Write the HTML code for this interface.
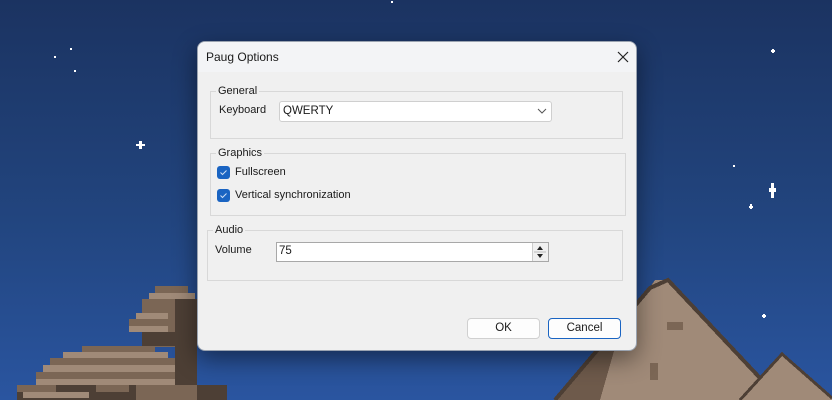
<!DOCTYPE html>
<html><head><style>
*{margin:0;padding:0;box-sizing:border-box}
body{width:832px;height:400px;overflow:hidden;position:relative;font-family:"Liberation Sans",Arial,sans-serif;font-size:11px;color:#1a1a1a;background:linear-gradient(#1b3361,#22457f 55%,#2a55a0)}
.abs{position:absolute}
#dlg{left:197px;top:41px;width:440px;height:310px;background:#f0f0f0;border:1px solid #9aa3b0;border-radius:8px;box-shadow:0 8px 24px rgba(0,0,0,.45);overflow:hidden}
.title{left:0;top:0;width:440px;height:30px;background:#f3f4f6}
.gb{border:1px solid #d8d8d8}
.lg{background:#f0f0f0;padding:0 2px;line-height:14px}
.cb{width:13px;height:13px;background:#1a64c2;border-radius:3px}
.btn{height:21px;background:#fdfdfd;border:1px solid #d0d0d0;border-radius:4px;text-align:center;line-height:19px;font-size:11.5px}
</style></head><body>
<svg class="abs" style="left:0;top:0" width="832" height="400" shape-rendering="crispEdges">
<g fill="#fff">
<rect x="391" y="1" width="2" height="2"/><rect x="70" y="48" width="2" height="2"/><rect x="54" y="56" width="2" height="2"/><rect x="74" y="70" width="2" height="2"/>
<rect x="136" y="144" width="9" height="2"/><rect x="139" y="141" width="3" height="8"/>
<rect x="772" y="49" width="2" height="4"/><rect x="771" y="50" width="4" height="2"/>
<rect x="733" y="165" width="2" height="2"/><rect x="771" y="183" width="3" height="15"/><rect x="769" y="188" width="7" height="4"/>
<rect x="750" y="204" width="2" height="5"/><rect x="749" y="206" width="4" height="2"/><rect x="763" y="314" width="2" height="4"/><rect x="762" y="315" width="4" height="2"/>
</g>
<polygon points="555,400 650,288 655,280 668,280 760,378 760,400" fill="#a08a78"/>
<polygon points="555,400 650,288 655,280 640,300 620,330 600,400" fill="#6e5a4b"/>
<polyline points="555,400 650,288 668,280 760,378" fill="none" stroke="#4d3f35" stroke-width="4"/>
<rect x="667" y="322" width="16" height="8" fill="#7b6655"/><rect x="650" y="363" width="8" height="17" fill="#7b6655"/>
<polygon points="740,400 782,354 832,398 832,400" fill="#a08a78"/>
<polyline points="740,400 782,354 832,398" fill="none" stroke="#4d3f35" stroke-width="3"/>
<rect x="155" y="286" width="33" height="7" fill="#7b6655"/>
<rect x="149" y="293" width="46" height="6" fill="#a08a78"/>
<rect x="142" y="299" width="55" height="48" fill="#7b6655"/>
<rect x="175" y="299" width="22" height="48" fill="#4d3f35"/>
<rect x="136" y="313" width="32" height="6" fill="#a08a78"/>
<rect x="129" y="319" width="39" height="7" fill="#7b6655"/>
<rect x="129" y="326" width="39" height="6" fill="#a08a78"/>
<rect x="142" y="332" width="40" height="14" fill="#4d3f35"/>
<rect x="82" y="346" width="73" height="6" fill="#7b6655"/>
<rect x="63" y="352" width="105" height="6" fill="#a08a78"/>
<rect x="50" y="358" width="125" height="7" fill="#7b6655"/>
<rect x="43" y="365" width="139" height="7" fill="#a08a78"/>
<rect x="36" y="372" width="146" height="7" fill="#7b6655"/>
<rect x="36" y="379" width="146" height="6" fill="#a08a78"/>
<rect x="175" y="340" width="22" height="60" fill="#4d3f35"/>
<rect x="17" y="385" width="210" height="15" fill="#4d3f35"/>
<rect x="17" y="385" width="39" height="7" fill="#7b6655"/><rect x="96" y="385" width="33" height="7" fill="#7b6655"/><rect x="136" y="385" width="61" height="15" fill="#7b6655"/>
<rect x="23" y="392" width="66" height="6" fill="#a08a78"/>
</svg>
<div id="dlg" class="abs">
<div class="abs title"></div>
<div class="abs" style="left:8px;top:8px;font-size:12px">Paug Options</div>
<svg class="abs" style="left:419px;top:9px" width="12" height="12"><path d="M1 1L11 11M11 1L1 11" stroke="#222" stroke-width="1.2"/></svg>

<div class="abs gb" style="left:12px;top:49px;width:413px;height:48px"></div>
<div class="abs lg" style="left:18px;top:42px">General</div>
<div class="abs" style="left:21px;top:62px">Keyboard</div>
<div class="abs" style="left:81px;top:59px;width:273px;height:21px;background:#fff;border:1px solid #cfcfcf;border-radius:3px;padding:3px 0 0 3px;font-size:11.5px">QWERTY</div>
<svg class="abs" style="left:339px;top:65px" width="10" height="8"><path d="M1 2L5 6L9 2" fill="none" stroke="#555" stroke-width="1"/></svg>

<div class="abs gb" style="left:12px;top:111px;width:416px;height:63px"></div>
<div class="abs lg" style="left:18px;top:104px">Graphics</div>
<div class="abs cb" style="left:19px;top:124px"></div>
<svg class="abs" style="left:19px;top:124px" width="13" height="13"><path d="M3.5 6.5L5.5 8.5L9.5 4.5" fill="none" stroke="#cfe0f5" stroke-width="1"/></svg>
<div class="abs" style="left:37px;top:124px">Fullscreen</div>
<div class="abs cb" style="left:19px;top:147px"></div>
<svg class="abs" style="left:19px;top:147px" width="13" height="13"><path d="M3.5 6.5L5.5 8.5L9.5 4.5" fill="none" stroke="#cfe0f5" stroke-width="1"/></svg>
<div class="abs" style="left:37px;top:147px">Vertical synchronization</div>

<div class="abs gb" style="left:9px;top:188px;width:416px;height:51px"></div>
<div class="abs lg" style="left:15px;top:181px">Audio</div>
<div class="abs" style="left:17px;top:202px">Volume</div>
<div class="abs" style="left:78px;top:200px;width:273px;height:20px;background:#fff;border:1px solid #a8a8a8;padding:2px 0 0 2px;font-size:11.5px">75</div>
<div class="abs" style="left:334px;top:201px;width:16px;height:18px;background:#f0f0f0;border-left:1px solid #ccc"></div>
<svg class="abs" style="left:334px;top:201px" width="16" height="18"><path d="M5 7L8 3L11 7Z M5 11L11 11L8 15Z" fill="#222"/><path d="M2 9H14" stroke="#bbb"/></svg>

<div class="abs btn" style="left:269px;top:276px;width:73px">OK</div>
<div class="abs btn" style="left:350px;top:276px;width:73px;border:1px solid #1a64c2">Cancel</div>
</div>
</body></html>
